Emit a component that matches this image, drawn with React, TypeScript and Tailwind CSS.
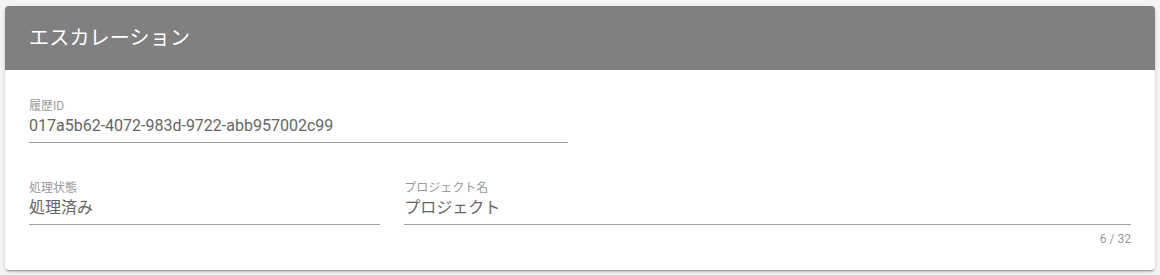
const font = "font-['Roboto','Noto_Sans_CJK_JP',sans-serif]";

function Field({
  label,
  value,
  counter,
  className = "",
}: {
  label: string;
  value: string;
  counter?: string;
  className?: string;
}) {
  return (
    <div className={className}>
      <div className="border-b border-[#a0a0a0]">
        <div className="text-[12px] leading-4 text-[#9a9a9a]">{label}</div>
        <div className="text-[16px] leading-6 pb-[4px] text-[#666666]">{value}</div>
      </div>
      {counter && (
        <div className="mt-[6px] text-right text-[12px] leading-4 text-[#9a9a9a]">{counter}</div>
      )}
    </div>
  );
}

export default function App() {
  return (
    <div className={`min-h-[275px] bg-[#f5f5f5] pt-[6px] px-[5px] ${font}`}>
      <div className="rounded-[4px] bg-white overflow-hidden shadow-[0_3px_1px_-2px_rgba(0,0,0,0.2),0_2px_2px_0_rgba(0,0,0,0.14),0_1px_5px_0_rgba(0,0,0,0.12)]">
        <div className="h-16 bg-[#808080] px-6 flex items-center">
          <h1 className="text-[20px] text-white tracking-[0.01em]">エスカレーション</h1>
        </div>
        <div className="px-6 pt-[28px] pb-[23px]">
          <div className="grid grid-cols-12 gap-x-6">
            <Field className="col-span-6" label="履歴ID" value="017a5b62-4072-983d-9722-abb957002c99" />
          </div>
          <div className="grid grid-cols-12 gap-x-6 mt-[37px]">
            <Field className="col-span-4" label="処理状態" value="処理済み" />
            <Field className="col-span-8" label="プロジェクト名" value="プロジェクト" counter="6 / 32" />
          </div>
        </div>
      </div>
    </div>
  );
}
